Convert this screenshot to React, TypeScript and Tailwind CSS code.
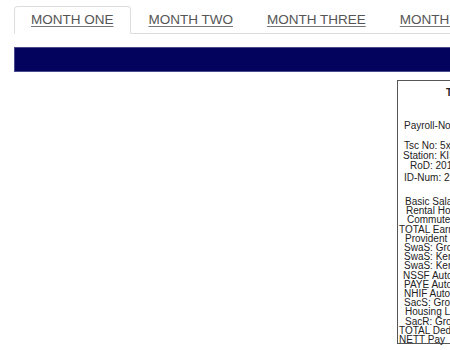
import React from "react";

const tabs = ["MONTH ONE", "MONTH TWO", "MONTH THREE", "MONTH FOUR"];

// [label, left offset inside the slip]
const topLines: [string, string][] = [
  ["Tsc No: 5xxxxx", "pl-[6px]"],
  ["Station: KISUMU", "pl-[5px]"],
  ["RoD: 2019", "pl-[12px]"],
];

const items: [string, string][] = [
  ["Basic Salary: 45,000", "pl-[7px]"],
  ["Rental House Allowance", "pl-[8px]"],
  ["Commuter Allowance", "pl-[9px]"],
  ["TOTAL Earnings", "pl-[1px]"],
  ["Provident Fund", "pl-[7px]"],
  ["SwaS: Gross", "pl-[6px]"],
  ["SwaS: Kenya", "pl-[6px]"],
  ["SwaS: Kenya", "pl-[6px]"],
  ["NSSF Auto", "pl-[5px]"],
  ["PAYE Auto", "pl-[6px]"],
  ["NHIF Auto", "pl-[6px]"],
  ["SacS: Gross", "pl-[6px]"],
  ["Housing Levy", "pl-[7px]"],
  ["SacR: Gross", "pl-[7px]"],
  ["TOTAL Deductions", "pl-[1px]"],
  ["NETT Pay", "pl-[1px]"],
];

const App: React.FC = () => {
  return (
    <div className="w-[450px] h-[350px] overflow-hidden bg-white font-['Liberation_Sans',Arial,sans-serif]">
      <div className="pl-[14px] pt-[6px]">
        {/* tabs */}
        <div className="flex w-[600px] border-b border-[#dddddd]">
          {tabs.map((t, i) => (
            <div
              key={t}
              className={
                i === 0
                  ? "shrink-0 mr-[2px] -mb-px px-4 h-[28px] flex items-center border border-[#dddddd] border-b-white rounded-t-[4px] bg-white"
                  : "shrink-0 mr-[2px] px-4 h-[27px] flex items-center"
              }
            >
              <span className="text-[13.5px] leading-none text-[#555555] underline underline-offset-[2px] decoration-[#777777] whitespace-nowrap">
                {t}
              </span>
            </div>
          ))}
        </div>

        {/* navy header bar */}
        <div className="mt-[13px] h-[25px] w-[600px] bg-[#03035e] border border-[#4a4a8a]" />

        {/* payslip */}
        <div className="ml-[383px] mt-[8px] w-[200px] h-[264px] border border-[#555555] text-[10px] text-[#222222] leading-[10px] whitespace-nowrap">
          <div className="pl-[48px] pt-[7px] font-bold">TEACHERS SERVICE COMMISSION</div>
          <div className="pl-[6px] mt-[23px]">Payroll-No: 2020</div>
          <div className="mt-[10px]">
            {topLines.map(([label, pad]) => (
              <div key={label} className={pad}>
                {label}
              </div>
            ))}
          </div>
          <div className="pl-[6px] mt-[2px]">ID-Num: 2xxxxxxx</div>
          <div className="mt-[14px] leading-[9.2px]">
            {items.map(([label, pad], i) => (
              <div key={i} className={pad}>
                {label}
              </div>
            ))}
          </div>
        </div>
      </div>
    </div>
  );
};

export default App;
